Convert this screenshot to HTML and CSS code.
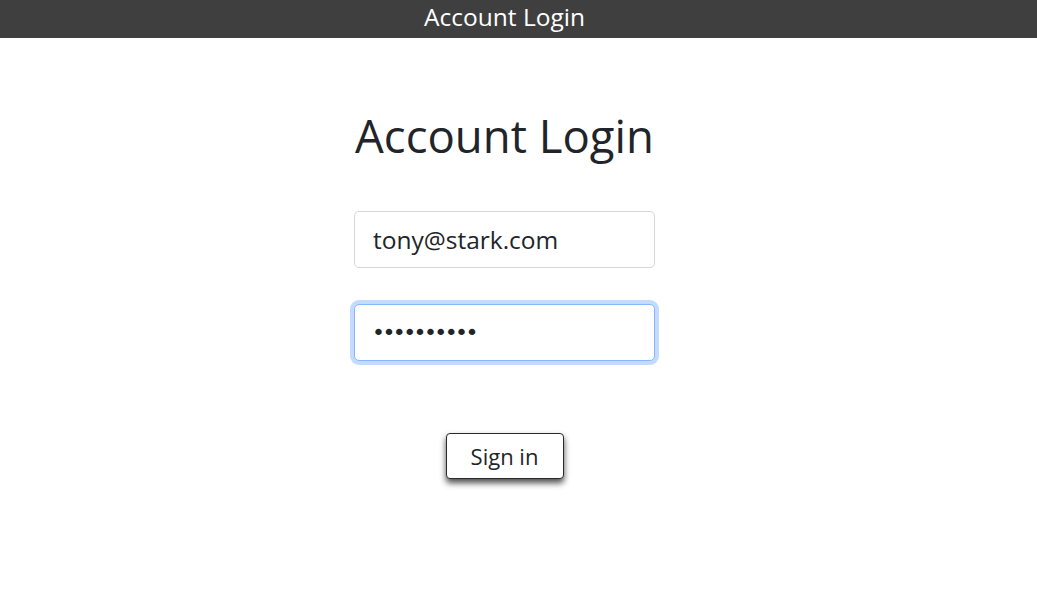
FILE: index.html
```html
<!DOCTYPE html>
<html lang="en">
<head>
<meta charset="utf-8">
<title>Account Login</title>
<link rel="stylesheet" href="styles.css">
</head>
<body>
<div class="page">
  <header class="topbar">Account Login</header>
  <main class="login">
    <h1 class="login-title">Account Login</h1>
    <form class="login-form">
      <input class="field" type="email" value="tony@stark.com">
      <input class="field field-focus" type="password" value="••••••••••">
      <button class="signin" type="button">Sign in</button>
    </form>
  </main>
</div>
</body>
</html>
```
FILE: styles.css
```css
html, body {
  margin: 0;
  padding: 0;
  background: #fff;
  font-family: "Open Sans", "Noto Sans", sans-serif;
  color: #212529;
}
.page {
  width: 1009px;
}
.topbar {
  height: 38px;
  background: #3f3f3f;
  color: #fff;
  font-size: 24.5px;
  line-height: 33px;
  text-align: center;
  margin-right: -28px;
  padding-right: 28px;
}
.login {
  display: flex;
  flex-direction: column;
  align-items: center;
  padding-top: 67px;
  padding-bottom: 80px;
}
.login-title {
  margin: 0;
  font-size: 45.5px;
  font-weight: 400;
  line-height: 60px;
}
.login-form {
  display: flex;
  flex-direction: column;
  align-items: center;
  gap: 36px;
  margin-top: 46px;
}
.field {
  box-sizing: border-box;
  width: 301px;
  height: 57px;
  padding: 0 18px;
  border: 1px solid #d4d6d9;
  border-radius: 5px;
  font-family: inherit;
  font-size: 24.5px;
  color: #212529;
  background: #fff;
  outline: none;
}
.field-focus {
  border-color: #86b7fe;
  box-shadow: 0 0 0 4px #c2dbfe;
  font-family: "DejaVu Sans", sans-serif;
  font-size: 22px;
  letter-spacing: -2.6px;
  padding-left: 17px;
}
.signin {
  margin-top: 36px;
  box-sizing: border-box;
  width: 118px;
  height: 46px;
  border: 1px solid #2a2a2a;
  border-radius: 4px;
  background: #fff;
  font-family: inherit;
  font-size: 22px;
  color: #212529;
  box-shadow: 0 4px 6px rgba(0, 0, 0, 0.7);
}
```
